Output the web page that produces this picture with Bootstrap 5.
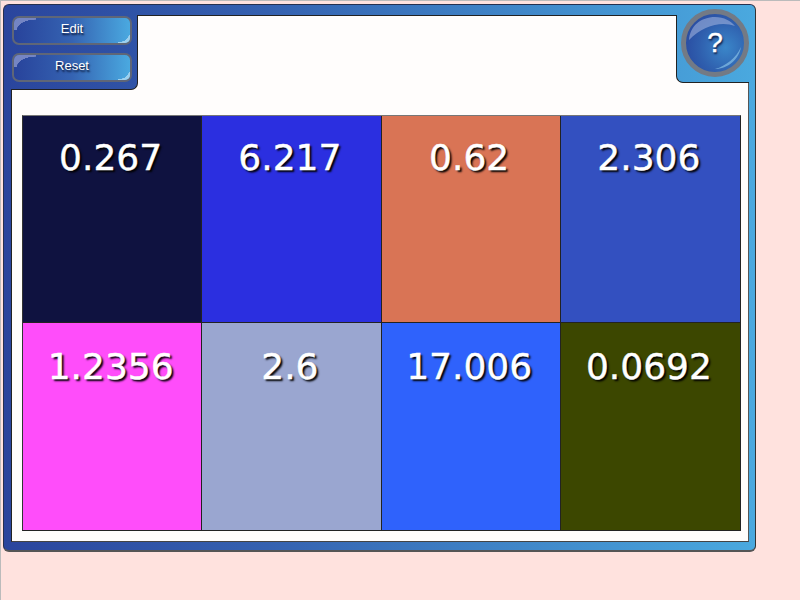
<!DOCTYPE html>
<html lang="en">
<head>
<meta charset="utf-8">
<title>Number grid</title>
<link href="https://cdn.jsdelivr.net/npm/bootstrap@5.3.0/dist/css/bootstrap.min.css" rel="stylesheet">
<style>
html,body{height:100%;overflow:hidden}
body{background:#ffe2de;border-left:1px solid #bbb;border-top:1px solid #bbb;font-family:"Liberation Sans",Arial,sans-serif;padding:3px 0 0 2px}
.app-win{width:753px;height:548px;border:1px solid #26304f;border-right-color:#333;border-bottom:2px solid #555;border-radius:6px;padding:10px 6px 8px 7px;
  background:linear-gradient(90deg,#2a459d 0%,#3561b0 35%,#4aa9df 100%)}
.app-sheet{height:100%;background:#fffdfc;border:1px solid #222;border-right-color:#555;border-bottom-color:#444;display:flex;flex-direction:column}
.app-top{height:99px;display:flex;justify-content:space-between;align-items:flex-start}
.tab-left,.tab-right{margin:-1px;background-image:linear-gradient(90deg,#2a459d 0%,#3561b0 35%,#4aa9df 100%);background-attachment:fixed;background-size:753px 100%;background-position:3px 0;background-repeat:no-repeat}
.tab-left{width:127px;height:75px;border-right:1px solid #222;border-bottom:1px solid #222;border-bottom-right-radius:7px;padding:1px 0 0 1px;display:flex;flex-direction:column;gap:8px;position:relative}
.tab-right{width:73px;height:68px;border-left:1px solid #222;border-bottom:1px solid #222;border-bottom-left-radius:7px;padding:0 0 0 4px;position:relative;background-color:#4aa9df}
.gloss-btn{position:relative;overflow:hidden;width:120px;height:29px;padding:0 0 5px;border:2px solid #5f6677;border-radius:7px;color:#fff;font-size:13px;line-height:1;
  text-shadow:1px 2px 2px #081230;background:linear-gradient(90deg,#28439b 0%,#3563b2 50%,#4aa9e0 100%)}
.gloss-btn:hover{color:#fff;background:linear-gradient(90deg,#28439b 0%,#3563b2 50%,#4aa9e0 100%);border-color:#5f6677}
.gloss-btn::before{content:"";position:absolute;left:0;top:0;width:22px;height:12px;background:radial-gradient(ellipse 100% 100% at 100% 100%,rgba(116,133,196,0) 86%,#7485c4 88%)}
.gloss-btn::after{content:"";position:absolute;right:0;bottom:0;width:12px;height:8px;background:radial-gradient(ellipse 100% 100% at 0 0,rgba(157,208,238,0) 88%,#9dd0ee 90%)}
.help-btn{position:relative;width:68px;height:68px;margin-top:-6px;padding:0;border:5px solid #737a85;border-radius:50%;color:#fff;font-size:28px;line-height:1;overflow:hidden;
  -webkit-text-stroke:.4px #fff;text-shadow:1px 2px 2px #0c1a40;background:radial-gradient(circle at 68% 58%,#3a86c9 0%,#2f5fae 50%,#26409a 100%)}
.help-btn svg{position:absolute;inset:0;width:100%;height:100%}
.help-btn span{position:relative}
.num-grid{margin:0 7px 0 10px;border:1px solid #222;border-top-color:#777;border-left-color:#333}
.num-cell{height:207px;padding:19px 3px 0 0;border:1px solid #222;border-width:0 1px 1px 0;color:#fff;text-align:center;font-family:"DejaVu Sans",sans-serif;font-size:36px;line-height:45px;-webkit-text-stroke:.4px #fff;text-shadow:2px 2px 2px #000}
.row-last .num-cell{border-bottom:0;padding-top:21px}
.num-cell.edge{border-right:0}
.c1{background:#0f1240}.c2{background:#2b2fe0}.c3{background:#d97455}.c4{background:#3350c0}
.c5{background:#ff4dfa}.c6{background:#9aa6d0}.c7{background:#2f62fc}.c8{background:#3c4700}
</style>
</head>
<body>
<div class="app-win">
  <div class="app-sheet">
    <div class="app-top">
      <div class="tab-left">
        <button type="button" class="btn gloss-btn">Edit</button>
        <button type="button" class="btn gloss-btn">Reset</button>
      </div>
      <div class="tab-right">
        <button type="button" class="btn help-btn" aria-label="Help">
          <svg viewBox="0 0 58 58" aria-hidden="true"><path d="M3 26C4 12 15 3 29 3c9 0 16 4 20 9C36 7 17 11 3 26z" fill="#9fb0dc" opacity=".6"/><path d="M55 33c-2 12-13 22-26 22 11-3 21-11 26-22z" fill="#86bfe6" opacity=".7"/></svg>
          <span>?</span>
        </button>
      </div>
    </div>
    <div class="num-grid">
      <div class="row g-0">
        <div class="col-3 num-cell c1">0.267</div>
        <div class="col-3 num-cell c2">6.217</div>
        <div class="col-3 num-cell c3">0.62</div>
        <div class="col-3 num-cell c4 edge">2.306</div>
      </div>
      <div class="row g-0 row-last">
        <div class="col-3 num-cell c5">1.2356</div>
        <div class="col-3 num-cell c6">2.6</div>
        <div class="col-3 num-cell c7">17.006</div>
        <div class="col-3 num-cell c8 edge">0.0692</div>
      </div>
    </div>
  </div>
</div>
<script src="https://cdn.jsdelivr.net/npm/bootstrap@5.3.0/dist/js/bootstrap.bundle.min.js"></script>
</body>
</html>
